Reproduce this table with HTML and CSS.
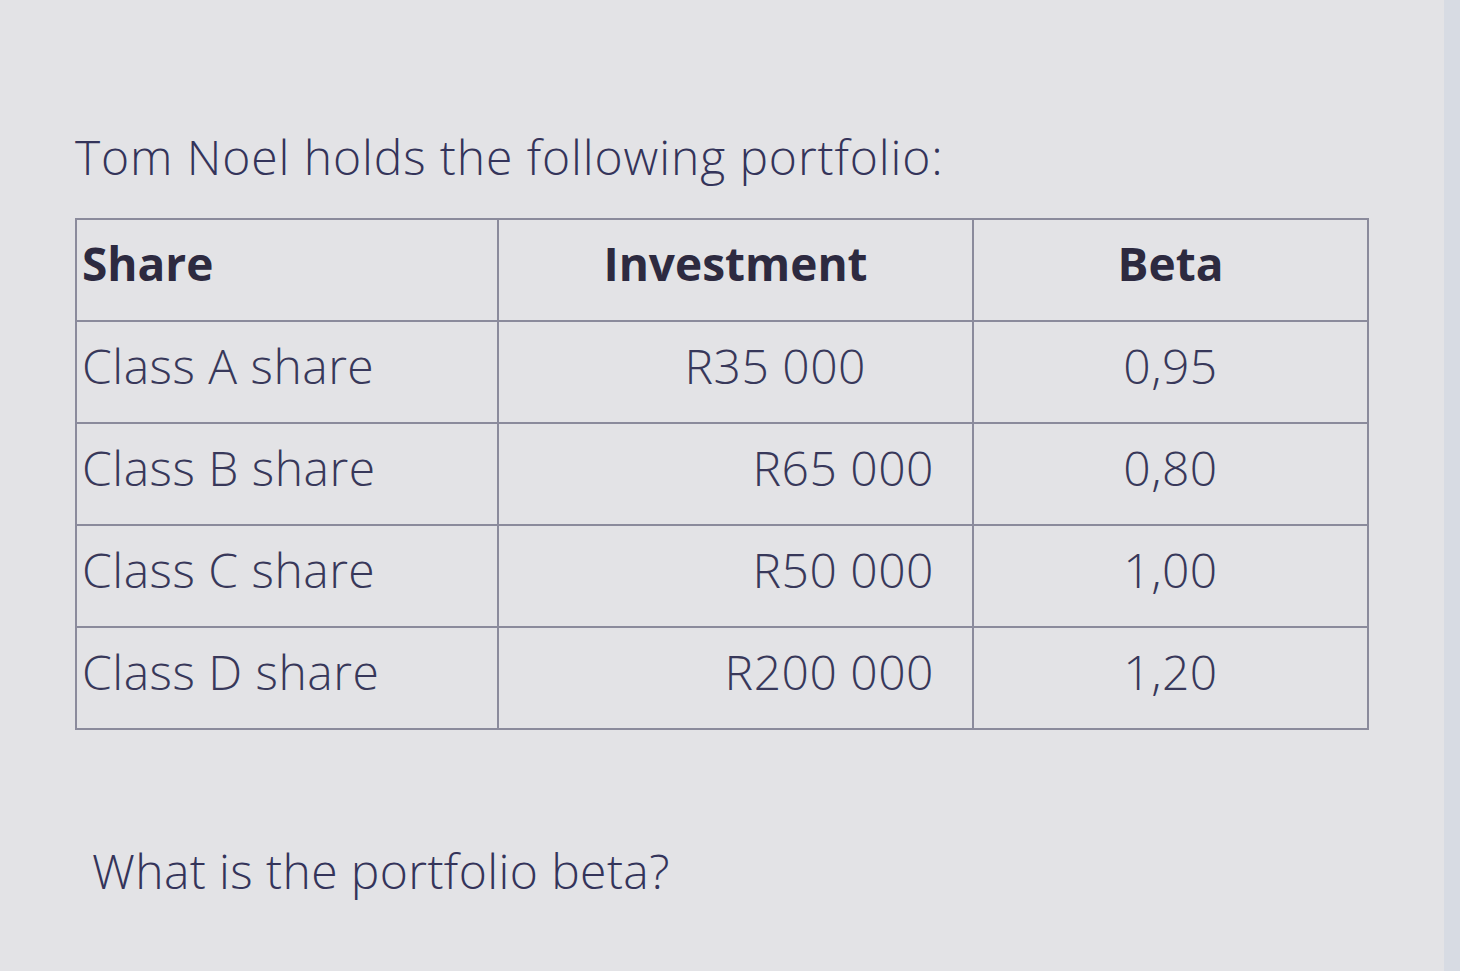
FILE: index.html
```html
<!DOCTYPE html>
<html lang="en">
<head>
<meta charset="utf-8">
<title>Portfolio</title>
<link rel="stylesheet" href="styles.css">
</head>
<body>
<div class="screen">
  <main class="content">
    <p class="intro">Tom Noel holds the following portfolio:</p>
    <table class="portfolio">
      <thead>
        <tr>
          <th class="col-share">Share</th>
          <th class="col-inv">Investment</th>
          <th class="col-beta">Beta</th>
        </tr>
      </thead>
      <tbody>
        <tr>
          <td class="col-share">Class A share</td>
          <td class="col-inv inv-first">R35 000</td>
          <td class="col-beta">0,95</td>
        </tr>
        <tr>
          <td class="col-share">Class B share</td>
          <td class="col-inv">R65 000</td>
          <td class="col-beta">0,80</td>
        </tr>
        <tr>
          <td class="col-share">Class C share</td>
          <td class="col-inv">R50 000</td>
          <td class="col-beta">1,00</td>
        </tr>
        <tr>
          <td class="col-share">Class D share</td>
          <td class="col-inv">R200 000</td>
          <td class="col-beta">1,20</td>
        </tr>
      </tbody>
    </table>
    <p class="question">What is the portfolio beta?</p>
  </main>
  <div class="edge"></div>
</div>
</body>
</html>
```

FILE: styles.css
```css
html, body {
  margin: 0;
  padding: 0;
  height: 100%;
}
body {
  background: #e3e3e6;
  font-family: "Open Sans", "Noto Sans", sans-serif;
  color: #34344f;
  overflow: hidden;
}
.screen {
  display: flex;
  height: 971px;
}
.content {
  flex: 1;
  padding: 124px 0 0 75px;
}
.edge {
  width: 16px;
  background: #d7dbe3;
}
.intro {
  margin: 0;
  font-size: 48px;
  font-weight: 300;
  letter-spacing: 0.9px;
  line-height: 66px;
  color: #34345a;
}
.portfolio {
  margin-top: 28px;
  width: 1294px;
  border-collapse: collapse;
  table-layout: fixed;
  font-size: 48px;
  letter-spacing: 0.5px;
}
.portfolio th,
.portfolio td {
  border: 2px solid #8b8b9c;
  height: 86px;
  padding: 0 5px 14px;
  vertical-align: middle;
  white-space: nowrap;
}
.portfolio th {
  font-weight: 700;
  font-size: 46px;
  letter-spacing: 0;
  color: #2d2a40;
}
.portfolio td {
  font-weight: 300;
  color: #38385a;
}
.col-share {
  width: 410px;
  text-align: left;
}
.col-inv {
  width: 463px;
  text-align: right;
  padding-right: 38px !important;
}
th.col-inv {
  text-align: center;
  padding-right: 5px !important;
}
.inv-first {
  padding-right: 106px !important;
}
.col-beta {
  text-align: center;
}
.question {
  margin: 108px 0 0 17px;
  font-size: 48px;
  font-weight: 300;
  letter-spacing: 0.4px;
  line-height: 66px;
  color: #34345a;
}
```
